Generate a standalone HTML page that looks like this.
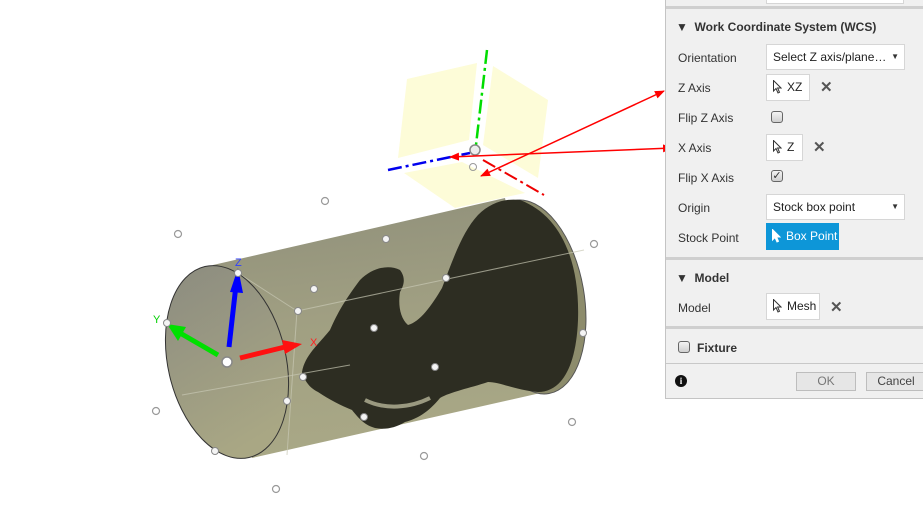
<!DOCTYPE html>
<html><head><meta charset="utf-8"><style>
html,body{margin:0;padding:0;background:#fff;width:923px;height:513px;overflow:hidden;font-family:"Liberation Sans",Arial,sans-serif;}
svg{position:absolute;left:0;top:0}
#panel{position:absolute;left:665px;top:0;width:258px;height:399px;background:#f0f0f0;border-left:1px solid #c4c4c4;border-bottom:1px solid #c4c4c4;box-sizing:border-box;font-size:12px;color:#333}
.a{position:absolute}
.lbl{position:absolute;left:12px;font-size:12px;color:#333}
.sep{position:absolute;left:0;width:258px;height:3px;background:#cfcfcf}
.box{position:absolute;background:#fff;border:1px solid #d6d6d6;box-sizing:border-box;font-size:12px;color:#222;white-space:nowrap;overflow:hidden;padding-left:6px}
.box svg,.bp svg{position:static;vertical-align:middle;margin-right:5px;margin-top:-2px}
.hdr{position:absolute;left:10px;font-weight:bold;font-size:12px;color:#333}
.x{position:absolute;font-size:15px;color:#555;font-weight:bold}
.cb{position:absolute;width:12px;height:12px;border:1px solid #666;border-radius:3px;background:linear-gradient(#f4f4f4,#cfcfcf);box-sizing:border-box}
.btn{position:absolute;top:372px;height:19px;border:1px solid #bdbdbd;background:#e6e6e6;box-sizing:border-box;font-size:12px;text-align:center;line-height:17px}
.dd{position:absolute;right:5px;top:0;font-size:8px;color:#333}
</style></head><body>
<svg width="923" height="513" viewBox="0 0 923 513">
<defs>
<linearGradient id="body" x1="0" y1="0" x2="0.15" y2="1"><stop offset="0" stop-color="#8f8f7a"/><stop offset="0.5" stop-color="#a09f82"/><stop offset="1" stop-color="#a9a886"/></linearGradient>
<linearGradient id="face" x1="0" y1="0" x2="0.2" y2="1"><stop offset="0" stop-color="#8c8c80"/><stop offset="1" stop-color="#a9a784"/></linearGradient>
<marker id="ah" markerWidth="10" markerHeight="8" refX="9" refY="4" orient="auto-start-reverse" markerUnits="userSpaceOnUse"><path d="M0,0 L10,4 L0,8 z" fill="#f00"/></marker>
</defs>
<polygon points="407,79 477,63 469,140 398,158" fill="#fdfcd8"/>
<polygon points="493,66 548,100 538,178 483,145" fill="#fdfcd8"/>
<polygon points="404,173 462,162 525,193 455,208" fill="#fdfcd8"/>
<polygon points="213,265 505,198 545,392 252,458" fill="url(#body)"/>
<ellipse cx="532" cy="297" rx="52" ry="98" transform="rotate(-10 532 297)" fill="#8d8c6c" stroke="#555" stroke-width="1"/>
<path d="M302,372 C305,355 318,345 330,330 C338,312 345,300 360,280 C372,268 388,264 400,270 C406,278 404,285 400,292 C398,305 400,318 408,325 C420,322 432,305 442,288 C452,262 462,232 478,215 C490,203 505,198 520,200 C560,215 580,260 578,320 C576,370 560,392 538,392 C515,390 500,382 488,382 C470,388 450,392 440,398 C430,410 420,418 405,422 C395,428 385,430 375,428 C365,425 360,420 352,410 C340,405 330,400 318,392 C310,388 305,382 302,372 Z" fill="#2d2d22"/>
<path d="M365,400 C385,410 410,408 430,398" fill="none" stroke="#9a9980" stroke-width="4"/>
<line x1="297" y1="311" x2="584" y2="250" stroke="#c8c8b4" stroke-width="1" opacity=".7"/>
<line x1="297" y1="311" x2="287" y2="455" stroke="#c8c8b4" stroke-width="1" opacity=".7"/>
<line x1="238" y1="273" x2="297" y2="311" stroke="#c8c8b4" stroke-width="1" opacity=".7"/>
<ellipse cx="227" cy="362" rx="59" ry="98" transform="rotate(-13 227 362)" fill="url(#face)" stroke="#333" stroke-width="1"/>
<line x1="182" y1="395" x2="350" y2="365" stroke="#c8c8b4" stroke-width="1" opacity=".7"/>
<line x1="229" y1="347" x2="236" y2="285" stroke="#0000ff" stroke-width="5"/>
<polygon points="230,292 238,268 243,293" fill="#0000ff"/>
<line x1="218" y1="355" x2="180" y2="333" stroke="#00e000" stroke-width="5"/>
<polygon points="186,327 167,324 178,341" fill="#00e000"/>
<line x1="240" y1="358" x2="285" y2="347" stroke="#ff1010" stroke-width="5"/>
<polygon points="282,340 302,344 285,354" fill="#ff1010"/>
<text x="235" y="266" font-size="11" fill="#3040ff">Z</text>
<text x="153" y="323" font-size="11" fill="#00d000">Y</text>
<text x="310" y="346" font-size="11" fill="#ff2020">X</text>
<circle cx="227" cy="362" r="5" fill="#fff" stroke="#888" stroke-width="1.5"/>
<line x1="487" y1="50" x2="476" y2="145" stroke="#00dd00" stroke-width="2.5" stroke-dasharray="14,4,3,4"/>
<line x1="388" y1="170" x2="470" y2="153" stroke="#0000ee" stroke-width="2.5" stroke-dasharray="14,4,3,4"/>
<line x1="483" y1="160" x2="544" y2="195" stroke="#ee0000" stroke-width="2" stroke-dasharray="14,4,3,4"/>
<circle cx="475" cy="150" r="5" fill="#eee" stroke="#888" stroke-width="1.5"/>
<circle cx="473" cy="167" r="3.5" fill="none" stroke="#999" stroke-width="1"/>
<line x1="481" y1="176" x2="664" y2="91" stroke="#f00" stroke-width="1.5" marker-start="url(#ah)" marker-end="url(#ah)"/>
<line x1="450" y1="157" x2="672" y2="148" stroke="#f00" stroke-width="1.5" marker-start="url(#ah)" marker-end="url(#ah)"/>
<g fill="none" stroke="#999" stroke-width="1.2">
<circle cx="178" cy="234" r="3.5"/><circle cx="325" cy="201" r="3.5"/><circle cx="594" cy="244" r="3.5"/>
<circle cx="156" cy="411" r="3.5"/><circle cx="276" cy="489" r="3.5"/><circle cx="424" cy="456" r="3.5"/><circle cx="572" cy="422" r="3.5"/>
</g>
<g fill="#f4f4f4" stroke="#888" stroke-width="1">
<circle cx="238" cy="273" r="3.5"/><circle cx="167" cy="323" r="3.5"/><circle cx="298" cy="311" r="3.5"/>
<circle cx="314" cy="289" r="3.5"/><circle cx="386" cy="239" r="3.5"/><circle cx="446" cy="278" r="3.5"/>
<circle cx="374" cy="328" r="3.5"/><circle cx="435" cy="367" r="3.5"/><circle cx="287" cy="401" r="3.5"/>
<circle cx="215" cy="451" r="3.5"/><circle cx="364" cy="417" r="3.5"/><circle cx="583" cy="333" r="3.5"/><circle cx="303" cy="377" r="3.5"/>
</g>
</svg>

<div id="panel">
<div class="sep" style="top:6px"></div>
<div class="box" style="left:100px;top:-2px;width:138px;height:6px"></div>
<div class="hdr" style="top:20px">&#9660;&nbsp; Work Coordinate System (WCS)</div>
<div class="lbl" style="top:51px">Orientation</div>
<div class="box" style="left:100px;top:44px;width:139px;height:26px;line-height:24px"><span style="display:inline-block;width:114px;overflow:hidden;text-overflow:ellipsis;vertical-align:top">Select Z axis/plane &amp; X axis</span><span class="dd">&#9660;</span></div>
<div class="lbl" style="top:81px">Z Axis</div>
<div class="box" style="left:100px;top:74px;width:44px;height:27px;line-height:25px"><svg width="9" height="14" viewBox="0 0 9 14"><path d="M0.5,0.5 L0.5,11 L3,8.5 L5,13 L6.5,12.3 L4.6,8 L8,8 Z" fill="#fff" stroke="#333" stroke-width="1"/></svg>XZ</div>
<div class="x" style="left:154px;top:78px">&#10005;</div>
<div class="lbl" style="top:111px">Flip Z Axis</div>
<div class="cb" style="left:105px;top:111px"></div>
<div class="lbl" style="top:141px">X Axis</div>
<div class="box" style="left:100px;top:134px;width:37px;height:27px;line-height:25px"><svg width="9" height="14" viewBox="0 0 9 14"><path d="M0.5,0.5 L0.5,11 L3,8.5 L5,13 L6.5,12.3 L4.6,8 L8,8 Z" fill="#fff" stroke="#333" stroke-width="1"/></svg>Z</div>
<div class="x" style="left:147px;top:138px">&#10005;</div>
<div class="lbl" style="top:171px">Flip X Axis</div>
<div class="cb" style="left:105px;top:170px;font-size:11px;line-height:10px;text-align:center">&#10003;</div>
<div class="lbl" style="top:201px">Origin</div>
<div class="box" style="left:100px;top:194px;width:139px;height:26px;line-height:24px">Stock box point<span class="dd">&#9660;</span></div>
<div class="lbl" style="top:231px">Stock Point</div>
<div class="bp a" style="left:100px;top:223px;width:73px;height:27px;background:#0d96d8;color:#fff;line-height:27px;padding-left:6px;box-sizing:border-box;font-size:12px;white-space:nowrap"><svg width="9" height="14" viewBox="0 0 9 14"><path d="M0.5,0.5 L0.5,11 L3,8.5 L5,13 L6.5,12.3 L4.6,8 L8,8 Z" fill="#fff" stroke="#fff" stroke-width="1"/></svg>Box Point</div>
<div class="sep" style="top:257px"></div>
<div class="hdr" style="top:271px">&#9660;&nbsp; Model</div>
<div class="lbl" style="top:301px">Model</div>
<div class="box" style="left:100px;top:293px;width:54px;height:27px;line-height:25px"><svg width="9" height="14" viewBox="0 0 9 14"><path d="M0.5,0.5 L0.5,11 L3,8.5 L5,13 L6.5,12.3 L4.6,8 L8,8 Z" fill="#fff" stroke="#333" stroke-width="1"/></svg>Mesh</div>
<div class="x" style="left:164px;top:298px">&#10005;</div>
<div class="sep" style="top:326px"></div>
<div class="cb" style="left:12px;top:341px"></div>
<div class="a" style="left:31px;top:341px;font-weight:bold">Fixture</div>
<div class="a" style="left:0;top:363px;width:258px;height:1px;background:#c8c8c8"></div>
<div class="a" style="left:9px;top:375px;width:12px;height:12px;border-radius:6px;background:#111;color:#fff;font-size:9px;font-weight:bold;text-align:center;line-height:12px;font-family:'Liberation Serif',serif">i</div>
<div class="btn" style="left:130px;width:60px;color:#777">OK</div>
<div class="btn" style="left:200px;width:60px;color:#444">Cancel</div>
</div>
</body></html>
